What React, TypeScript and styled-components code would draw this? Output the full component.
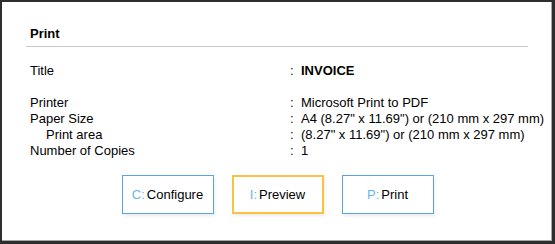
import React from 'react';
import styled, { createGlobalStyle } from 'styled-components';

const GlobalStyle = createGlobalStyle`
  html, body {
    margin: 0;
    padding: 0;
    background: #ffffff;
  }
  body {
    font-family: "Liberation Sans", Arial, sans-serif;
    color: #000000;
  }
`;

interface Detail {
  label: string;
  value: string;
  indent?: boolean;
  strong?: boolean;
}

const details: (Detail | null)[] = [
  { label: 'Title', value: 'INVOICE', strong: true },
  null,
  { label: 'Printer', value: 'Microsoft Print to PDF' },
  { label: 'Paper Size', value: 'A4 (8.27" x 11.69") or (210 mm x 297 mm)' },
  { label: 'Print area', value: '(8.27" x 11.69") or (210 mm x 297 mm)', indent: true },
  { label: 'Number of Copies', value: '1' }
];

const actions = [
  { key: 'C', label: 'Configure', focused: false },
  { key: 'I', label: 'Preview', focused: true },
  { key: 'P', label: 'Print', focused: false }
];

const App: React.FC = () => {
  return (
    <>
      <GlobalStyle />
      <Window>
        <Heading>Print</Heading>
        <DetailGrid>
          {details.map((row, index) =>
            row ? (
              <React.Fragment key={row.label}>
                <Label indent={!!row.indent}>{row.label}</Label>
                <Colon>:</Colon>
                <Value strong={!!row.strong}>{row.value}</Value>
              </React.Fragment>
            ) : (
              <Spacer key={`blank-${index}`} />
            )
          )}
        </DetailGrid>
        <Actions>
          {actions.map((action) => (
            <ActionButton key={action.key} focused={action.focused}>
              <Shortcut>{action.key}:</Shortcut>
              {action.label}
            </ActionButton>
          ))}
        </Actions>
      </Window>
    </>
  );
};

const Window = styled.div`
  box-sizing: border-box;
  width: 555px;
  height: 244px;
  border: 2px solid #2e2e2e;
  border-right-width: 3px;
  border-bottom-width: 3px;
  box-shadow: inset -1px -1px 0 #a8a8a8;
  padding: 24px 24px 0 24px;
  display: flex;
  flex-direction: column;
`;

const Heading = styled.h2`
  margin: 0;
  padding: 0 4px 4px;
  font-size: 13px;
  line-height: 16px;
  font-weight: bold;
  border-bottom: 1px solid #c8c8c8;
`;

const DetailGrid = styled.div`
  display: grid;
  grid-template-columns: 260px 11px 1fr;
  padding: 16px 0 0 4px;
  font-size: 13px;
  line-height: 16px;
  white-space: nowrap;
`;

const Label = styled.div<{ indent: boolean }>`
  padding-left: ${({ indent }) => (indent ? '16px' : '0')};
`;

const Colon = styled.div``;

const Value = styled.div<{ strong: boolean }>`
  font-weight: ${({ strong }) => (strong ? 'bold' : 'normal')};
`;

const Spacer = styled.div`
  grid-column: 1 / -1;
  height: 16px;
`;

const Actions = styled.div`
  display: flex;
  justify-content: center;
  gap: 18px;
  margin-top: 16px;
  padding-left: 1px;
`;

const ActionButton = styled.button<{ focused: boolean }>`
  box-sizing: border-box;
  width: 92px;
  height: 39px;
  background: #ffffff;
  border: ${({ focused }) => (focused ? '2px solid #f6c343' : '1px solid #5aa5dc')};
  border-radius: 0;
  box-shadow: 1px 2px 3px rgba(0, 0, 0, 0.08);
  font-family: "Liberation Sans", Arial, sans-serif;
  font-size: 13px;
  color: #000000;
  padding: 0;
  cursor: pointer;
`;

const Shortcut = styled.span`
  color: #6ab4ec;
  margin-right: 2px;
`;

export default App;
